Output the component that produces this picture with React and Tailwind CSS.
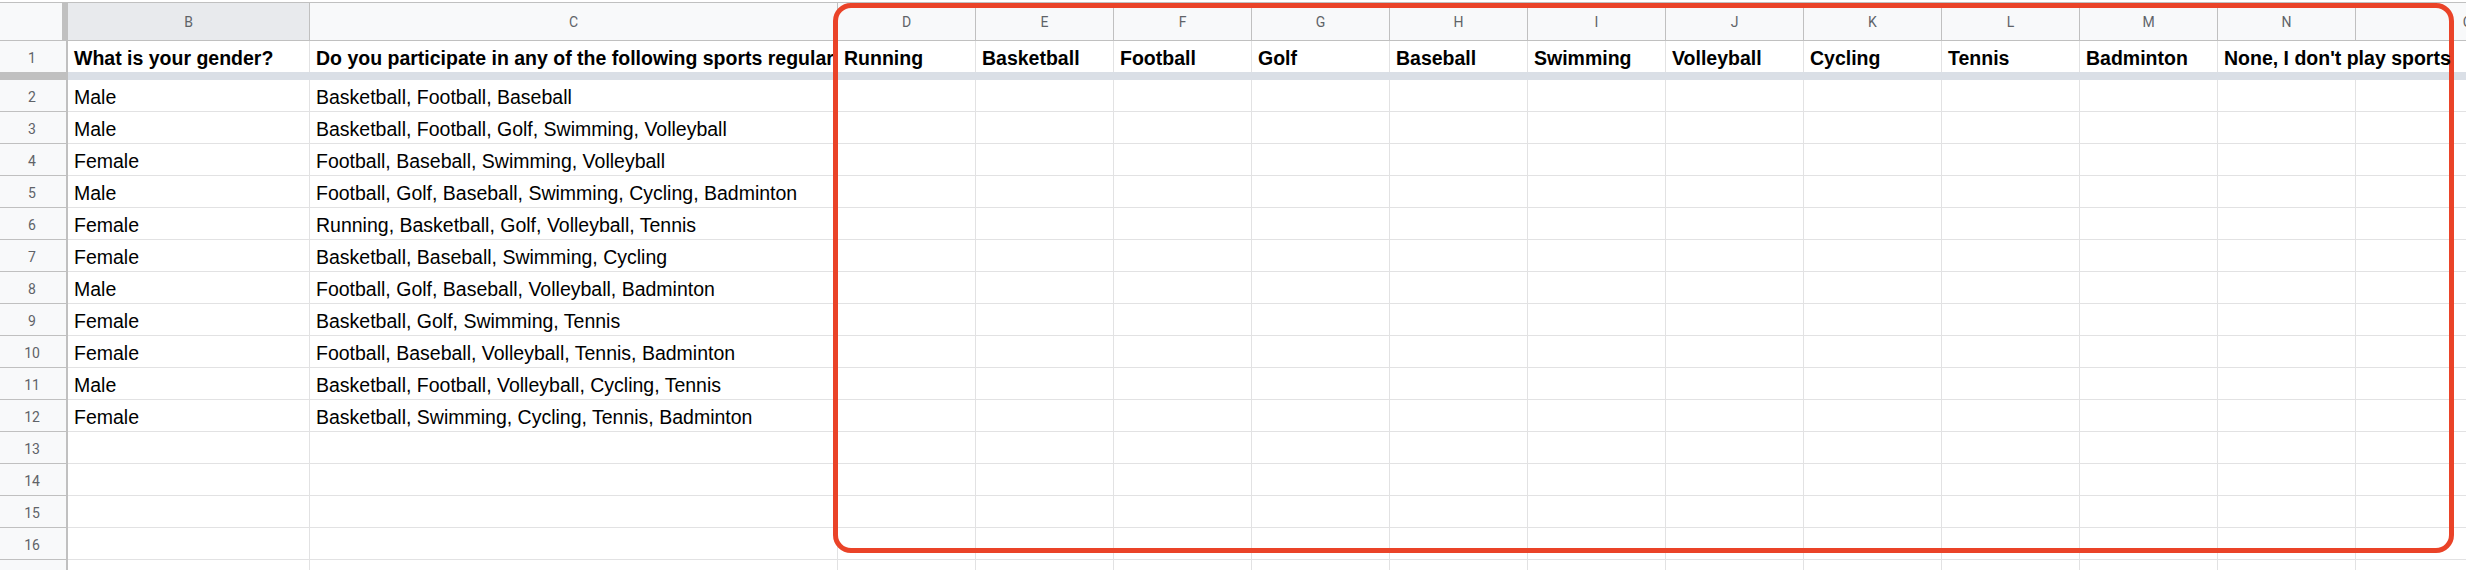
import React from "react";

const cols = [
  { k: "B", w: "w-[242px]", hb: "bg-[#e8eaed]" },
  { k: "C", w: "w-[528px]", hb: "bg-[#f8f9fa]" },
  { k: "D", w: "w-[138px]", hb: "bg-[#f8f9fa]" },
  { k: "E", w: "w-[138px]", hb: "bg-[#f8f9fa]" },
  { k: "F", w: "w-[138px]", hb: "bg-[#f8f9fa]" },
  { k: "G", w: "w-[138px]", hb: "bg-[#f8f9fa]" },
  { k: "H", w: "w-[138px]", hb: "bg-[#f8f9fa]" },
  { k: "I", w: "w-[138px]", hb: "bg-[#f8f9fa]" },
  { k: "J", w: "w-[138px]", hb: "bg-[#f8f9fa]" },
  { k: "K", w: "w-[138px]", hb: "bg-[#f8f9fa]" },
  { k: "L", w: "w-[138px]", hb: "bg-[#f8f9fa]" },
  { k: "M", w: "w-[138px]", hb: "bg-[#f8f9fa]" },
  { k: "N", w: "w-[138px]", hb: "bg-[#f8f9fa]" },
  { k: "O", w: "w-[224px]", hb: "bg-[#f8f9fa]" },
];

const header = [
  "What is your gender?",
  "Do you participate in any of the following sports regularly?",
  "Running",
  "Basketball",
  "Football",
  "Golf",
  "Baseball",
  "Swimming",
  "Volleyball",
  "Cycling",
  "Tennis",
  "Badminton",
  "None, I don't play sports",
  "",
];

const data = [
  ["Male", "Basketball, Football, Baseball"],
  ["Male", "Basketball, Football, Golf, Swimming, Volleyball"],
  ["Female", "Football, Baseball, Swimming, Volleyball"],
  ["Male", "Football, Golf, Baseball, Swimming, Cycling, Badminton"],
  ["Female", "Running, Basketball, Golf, Volleyball, Tennis"],
  ["Female", "Basketball, Baseball, Swimming, Cycling"],
  ["Male", "Football, Golf, Baseball, Volleyball, Badminton"],
  ["Female", "Basketball, Golf, Swimming, Tennis"],
  ["Female", "Football, Baseball, Volleyball, Tennis, Badminton"],
  ["Male", "Basketball, Football, Volleyball, Cycling, Tennis"],
  ["Female", "Basketball, Swimming, Cycling, Tennis, Badminton"],
  ["", ""],
  ["", ""],
  ["", ""],
  ["", ""],
  ["", ""],
];

const cellFont = "font-['Liberation_Sans',Arial,sans-serif] text-[19.5px] leading-[22px] text-black";
const hdrFont = "font-['Roboto',Arial,sans-serif] text-[14px] text-[#5f6368]";

function RowHeader({ n, bordered = true }) {
  return (
    <div
      className={`shrink-0 w-[68px] h-full bg-[#f8f9fa] border-r-2 border-[#c0c0c0] ${
        bordered ? "border-b" : ""
      } flex items-center justify-center pt-[3px] pr-[2px] ${hdrFont}`}
    >
      {n}
    </div>
  );
}

export default function App() {
  return (
    <div className="relative w-[2466px] h-[570px] overflow-hidden bg-white pt-[2px]">
      {/* column letters */}
      <div className="flex h-[39px] border-t border-b border-[#c0c0c0] w-max">
        <div className="shrink-0 w-[68px] h-full bg-[#f8f9fa] border-r-[6px] border-[#c0c0c0]" />
        {cols.map((c) => (
          <div
            key={c.k}
            className={`shrink-0 ${c.w} ${c.hb} h-full border-r border-[#c0c0c0] flex items-center justify-center pt-[2px] ${hdrFont}`}
          >
            {c.k}
          </div>
        ))}
      </div>

      {/* row 1 */}
      <div className="flex h-[31px] w-max">
        <RowHeader n={1} bordered={false} />
        {cols.map((c, i) => {
          const overflow = c.k === "N";
          return (
            <div
              key={c.k}
              className={`shrink-0 ${c.w} h-full ${
                overflow ? "overflow-visible relative z-10" : "overflow-hidden border-r border-[#e2e2e3]"
              } whitespace-nowrap flex items-end pb-[3px] pl-[6px] font-bold ${cellFont}`}
            >
              {header[i]}
            </div>
          );
        })}
      </div>

      {/* freeze bar */}
      <div className="flex h-[8px] w-max">
        <div className="shrink-0 w-[68px] h-full bg-[#c0c0c0]" />
        <div className="w-[2512px] h-full bg-[#dadfe6]" />
      </div>

      {/* data rows */}
      {data.map((r, ri) => (
        <div key={ri} className="flex h-[32px] w-max">
          <RowHeader n={ri + 2} />
          {cols.map((c, ci) => (
            <div
              key={c.k}
              className={`shrink-0 ${c.w} h-full border-r border-b border-[#e2e2e3] overflow-hidden whitespace-nowrap flex items-end pb-[3px] pl-[6px] ${cellFont}`}
            >
              {ci < 2 ? r[ci] : ""}
            </div>
          ))}
        </div>
      ))}

      {/* highlight box */}
      <div className="absolute left-[833px] top-[3px] w-[1621px] h-[550px] border-[5px] border-[#ea4328] rounded-[18px] pointer-events-none" />
    </div>
  );
}
